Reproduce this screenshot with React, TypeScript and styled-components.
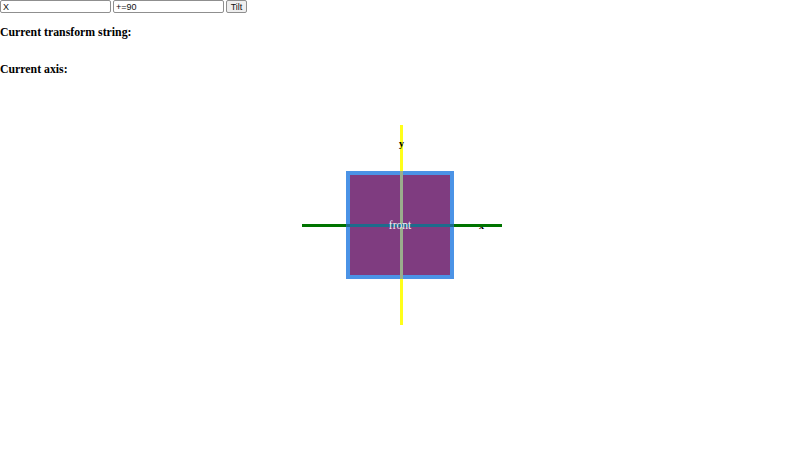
import { ReactElement } from "react";
import styled, { createGlobalStyle } from "styled-components";

const GlobalStyle = createGlobalStyle`
  html, body {
    margin: 0;
    padding: 0;
    background: #ffffff;
    font-family: "Liberation Serif", "Times New Roman", serif;
  }
`;

const Page = styled.div`
  width: 800px;
  height: 450px;
  overflow: hidden;
`;

const Controls = styled.form`
  display: flex;
  align-items: center;
  gap: 2px;
  height: 13px;
`;

const Field = styled.input`
  box-sizing: border-box;
  width: 111px;
  height: 13px;
  margin: 0;
  padding: 0 2px;
  border: 1px solid #8f8f8f;
  border-radius: 2px;
  font-family: "Liberation Sans", Arial, sans-serif;
  font-size: 9px;
  color: #111111;
  background: #ffffff;
`;

const TiltButton = styled.button`
  box-sizing: border-box;
  width: 21px;
  height: 13px;
  margin: 0;
  padding: 0;
  border: 1px solid #8f8f8f;
  border-radius: 2px;
  background: #efefef;
  font-family: "Liberation Sans", Arial, sans-serif;
  font-size: 9px;
  color: #111111;
`;

const Heading = styled.h3<{ $top: number }>`
  margin: ${(p) => p.$top}px 0 0 0;
  font-size: 11.8px;
  line-height: 14px;
  font-weight: bold;
  color: #000000;
`;

const Scene = styled.div`
  position: relative;
  width: 200px;
  height: 200px;
  margin: 49px auto 0;
`;

const AxisLine = styled.div<{ $dir: "x" | "y"; $color: string }>`
  position: absolute;
  background: ${(p) => p.$color};
  z-index: 2;
  ${(p) =>
    p.$dir === "x"
      ? `left: 2px; top: 98.5px; width: 200px; height: 3px;`
      : `left: 100px; top: 0; width: 3px; height: 200px;`}
`;

const AxisLabel = styled.span<{ $x: number; $y: number; $z: number }>`
  position: absolute;
  left: ${(p) => p.$x}px;
  top: ${(p) => p.$y}px;
  z-index: ${(p) => p.$z};
  font-size: 10px;
  line-height: 10px;
  font-weight: bold;
  color: #000000;
`;

const Face = styled.div`
  position: absolute;
  left: 46px;
  top: 46px;
  box-sizing: border-box;
  width: 108px;
  height: 108px;
  border: 4px solid #4b93e6;
  background: #7f3c80;
  z-index: 3;
  display: flex;
  align-items: center;
  justify-content: center;
`;

const FaceStrip = styled.div<{ $dir: "x" | "y"; $color: string }>`
  position: absolute;
  background: ${(p) => p.$color};
  ${(p) =>
    p.$dir === "x"
      ? `left: -4px; right: -4px; top: 48.5px; height: 3px; z-index: 2;`
      : `left: 50px; top: -4px; bottom: -4px; width: 3px; z-index: 1;`}
`;

const FaceLabel = styled.span`
  position: relative;
  z-index: 3;
  font-size: 11.5px;
  line-height: 12px;
  color: #f2eef6;
`;

export default function App(): ReactElement {
  return (
    <Page>
      <GlobalStyle />
      <Controls onSubmit={(e) => e.preventDefault()}>
        <Field defaultValue="X" />
        <Field defaultValue="+=90" />
        <TiltButton type="submit">Tilt</TiltButton>
      </Controls>
      <Heading $top={12}>Current transform string:</Heading>
      <Heading $top={23}>Current axis:</Heading>
      <Scene>
        <AxisLine $dir="y" $color="#ffff1a" />
        <AxisLine $dir="x" $color="#007400" />
        <AxisLabel $x={99} $y={14} $z={4}>
          y
        </AxisLabel>
        <AxisLabel $x={179} $y={96} $z={1}>
          x
        </AxisLabel>
        <Face>
          <FaceStrip $dir="y" $color="#9aae8c" />
          <FaceStrip $dir="x" $color="#1d6c8c" />
          <FaceLabel>front</FaceLabel>
        </Face>
      </Scene>
    </Page>
  );
}
